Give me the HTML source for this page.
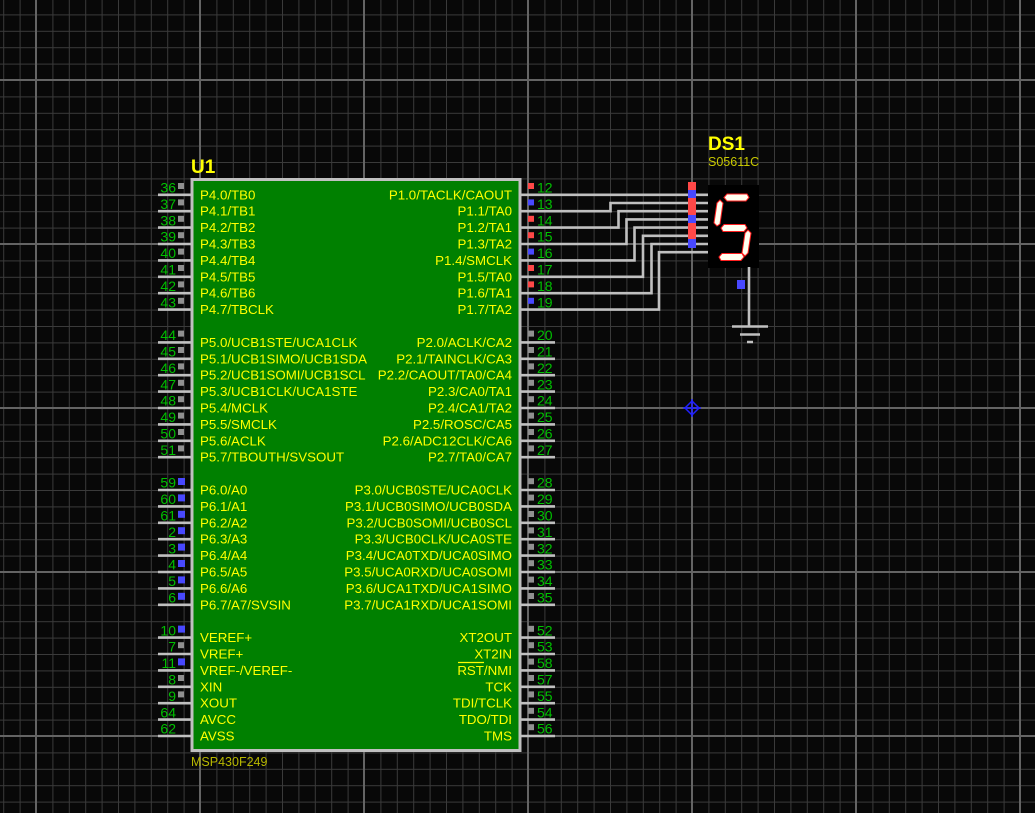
<!DOCTYPE html>
<html><head><meta charset="utf-8"><style>
html,body{margin:0;padding:0;background:#080808;overflow:hidden}
svg{display:block}
text{font-family:"Liberation Sans",Arial,sans-serif}
.l{fill:#ffff00;font-size:13.3px}
.r{fill:#ffff00;font-size:13.3px;text-anchor:end}
.nl{fill:#00c000;font-size:14px;text-anchor:end}
.nr{fill:#00c000;font-size:14px}
</style></head><body>
<svg width="1035" height="813" viewBox="0 0 1035 813" xmlns="http://www.w3.org/2000/svg">
<defs>
<pattern id="mn" x="36" y="80" width="16.4" height="16.4" patternUnits="userSpaceOnUse">
<path d="M0.5 0V16.4M0 0.5H16.4" stroke="#3a3a3a" stroke-width="1" fill="none"/>
</pattern>
<pattern id="mj" x="35" y="79" width="164" height="164" patternUnits="userSpaceOnUse">
<path d="M1 0V164M0 1H164" stroke="#646464" stroke-width="2" fill="none"/>
</pattern>
</defs>
<rect width="1035" height="813" fill="#080808"/>
<rect width="1035" height="813" fill="url(#mn)"/>
<rect width="1035" height="813" fill="url(#mj)"/>

<g stroke="#c0c0c0" stroke-width="2.6">
<path d="M158 194.8H192M158 211.2H192M158 227.6H192M158 244H192M158 260.4H192M158 276.8H192M158 293.2H192M158 309.6H192
M158 342.4H192M158 358.8H192M158 375.2H192M158 391.6H192M158 408H192M158 424.4H192M158 440.8H192M158 457.2H192
M158 490H192M158 506.4H192M158 522.8H192M158 539.2H192M158 555.6H192M158 572H192M158 588.4H192M158 604.8H192
M158 637.6H192M158 654H192M158 670.4H192M158 686.8H192M158 703.2H192M158 719.6H192M158 736H192"/>
<path d="M520 342.4H555M520 358.8H555M520 375.2H555M520 391.6H555M520 408H555M520 424.4H555M520 440.8H555M520 457.2H555
M520 490H555M520 506.4H555M520 522.8H555M520 539.2H555M520 555.6H555M520 572H555M520 588.4H555M520 604.8H555
M520 637.6H555M520 654H555M520 670.4H555M520 686.8H555M520 703.2H555M520 719.6H555M520 736H555"/>
</g>
<g stroke="#c0c0c0" stroke-width="2.6" fill="none">
<path d="M520 194.8H710"/>
<path d="M520 211.2H610.5V203H710"/>
<path d="M520 227.6H618.5V211.2H710"/>
<path d="M520 244H626.5V219.4H710"/>
<path d="M520 260.4H634.5V227.6H710"/>
<path d="M520 276.8H643V235.8H710"/>
<path d="M520 293.2H651.5V244H710"/>
<path d="M520 309.6H659V252.2H710"/>
</g>

<rect x="192" y="179.5" width="328" height="571" fill="#008000" stroke="#c0c0c0" stroke-width="3"/>

<g fill="#909090">
<rect x="178" y="183" width="6" height="6"/><rect x="178" y="199.4" width="6" height="6"/><rect x="178" y="215.8" width="6" height="6"/><rect x="178" y="232.2" width="6" height="6"/>
<rect x="178" y="248.6" width="6" height="6"/><rect x="178" y="265" width="6" height="6"/><rect x="178" y="281.4" width="6" height="6"/><rect x="178" y="297.8" width="6" height="6"/>
<rect x="178" y="330.6" width="6" height="6"/><rect x="178" y="347" width="6" height="6"/><rect x="178" y="363.4" width="6" height="6"/><rect x="178" y="379.8" width="6" height="6"/>
<rect x="178" y="396.2" width="6" height="6"/><rect x="178" y="412.6" width="6" height="6"/><rect x="178" y="429" width="6" height="6"/><rect x="178" y="445.4" width="6" height="6"/>
<rect x="178" y="642.2" width="6" height="6"/><rect x="178" y="675" width="6" height="6"/><rect x="178" y="691.4" width="6" height="6"/>
</g>
<g fill="#4848ff">
<rect x="178" y="478" width="7" height="7"/><rect x="178" y="494.4" width="7" height="7"/><rect x="178" y="510.8" width="7" height="7"/><rect x="178" y="527.2" width="7" height="7"/>
<rect x="178" y="543.6" width="7" height="7"/><rect x="178" y="560" width="7" height="7"/><rect x="178" y="576.4" width="7" height="7"/><rect x="178" y="592.8" width="7" height="7"/>
<rect x="178" y="625.6" width="7" height="7"/><rect x="178" y="658.4" width="7" height="7"/>
</g>
<g fill="#ff4848">
<rect x="528" y="183" width="6" height="6"/><rect x="528" y="215.8" width="6" height="6"/><rect x="528" y="232.2" width="6" height="6"/><rect x="528" y="265" width="6" height="6"/><rect x="528" y="281.4" width="6" height="6"/>
</g>
<g fill="#4848ff">
<rect x="528" y="199.4" width="6" height="6"/><rect x="528" y="248.6" width="6" height="6"/><rect x="528" y="297.8" width="6" height="6"/>
</g>
<g fill="#909090">
<rect x="528" y="330.6" width="6" height="6"/><rect x="528" y="347" width="6" height="6"/><rect x="528" y="363.4" width="6" height="6"/><rect x="528" y="379.8" width="6" height="6"/>
<rect x="528" y="396.2" width="6" height="6"/><rect x="528" y="412.6" width="6" height="6"/><rect x="528" y="429" width="6" height="6"/><rect x="528" y="445.4" width="6" height="6"/>
<rect x="528" y="478.2" width="6" height="6"/><rect x="528" y="494.6" width="6" height="6"/><rect x="528" y="511" width="6" height="6"/><rect x="528" y="527.4" width="6" height="6"/>
<rect x="528" y="543.8" width="6" height="6"/><rect x="528" y="560.2" width="6" height="6"/><rect x="528" y="576.6" width="6" height="6"/><rect x="528" y="593" width="6" height="6"/>
<rect x="528" y="625.8" width="6" height="6"/><rect x="528" y="642.2" width="6" height="6"/><rect x="528" y="658.6" width="6" height="6"/><rect x="528" y="675" width="6" height="6"/>
<rect x="528" y="691.4" width="6" height="6"/><rect x="528" y="707.8" width="6" height="6"/><rect x="528" y="724.2" width="6" height="6"/>
</g>

<g>
<text x="176" y="192.5" class="nl">36</text><text x="176" y="208.9" class="nl">37</text><text x="176" y="225.3" class="nl">38</text><text x="176" y="241.7" class="nl">39</text>
<text x="176" y="258.1" class="nl">40</text><text x="176" y="274.5" class="nl">41</text><text x="176" y="290.9" class="nl">42</text><text x="176" y="307.3" class="nl">43</text>
<text x="176" y="340.1" class="nl">44</text><text x="176" y="356.5" class="nl">45</text><text x="176" y="372.9" class="nl">46</text><text x="176" y="389.3" class="nl">47</text>
<text x="176" y="405.7" class="nl">48</text><text x="176" y="422.1" class="nl">49</text><text x="176" y="438.5" class="nl">50</text><text x="176" y="454.9" class="nl">51</text>
<text x="176" y="487.7" class="nl">59</text><text x="176" y="504.1" class="nl">60</text><text x="176" y="520.5" class="nl">61</text><text x="176" y="536.9" class="nl">2</text>
<text x="176" y="553.3" class="nl">3</text><text x="176" y="569.7" class="nl">4</text><text x="176" y="586.1" class="nl">5</text><text x="176" y="602.5" class="nl">6</text>
<text x="176" y="635.3" class="nl">10</text><text x="176" y="651.7" class="nl">7</text><text x="176" y="668.1" class="nl">11</text><text x="176" y="684.5" class="nl">8</text>
<text x="176" y="700.9" class="nl">9</text><text x="176" y="717.3" class="nl">64</text><text x="176" y="733.7" class="nl">62</text>
</g>
<g>
<text x="537" y="192.5" class="nr">12</text><text x="537" y="208.9" class="nr">13</text><text x="537" y="225.3" class="nr">14</text><text x="537" y="241.7" class="nr">15</text>
<text x="537" y="258.1" class="nr">16</text><text x="537" y="274.5" class="nr">17</text><text x="537" y="290.9" class="nr">18</text><text x="537" y="307.3" class="nr">19</text>
<text x="537" y="340.1" class="nr">20</text><text x="537" y="356.5" class="nr">21</text><text x="537" y="372.9" class="nr">22</text><text x="537" y="389.3" class="nr">23</text>
<text x="537" y="405.7" class="nr">24</text><text x="537" y="422.1" class="nr">25</text><text x="537" y="438.5" class="nr">26</text><text x="537" y="454.9" class="nr">27</text>
<text x="537" y="487.7" class="nr">28</text><text x="537" y="504.1" class="nr">29</text><text x="537" y="520.5" class="nr">30</text><text x="537" y="536.9" class="nr">31</text>
<text x="537" y="553.3" class="nr">32</text><text x="537" y="569.7" class="nr">33</text><text x="537" y="586.1" class="nr">34</text><text x="537" y="602.5" class="nr">35</text>
<text x="537" y="635.3" class="nr">52</text><text x="537" y="651.7" class="nr">53</text><text x="537" y="668.1" class="nr">58</text><text x="537" y="684.5" class="nr">57</text>
<text x="537" y="700.9" class="nr">55</text><text x="537" y="717.3" class="nr">54</text><text x="537" y="733.7" class="nr">56</text>
</g>

<g>
<text x="200" y="199.3" class="l">P4.0/TB0</text><text x="200" y="215.7" class="l">P4.1/TB1</text><text x="200" y="232.1" class="l">P4.2/TB2</text><text x="200" y="248.5" class="l">P4.3/TB3</text>
<text x="200" y="264.9" class="l">P4.4/TB4</text><text x="200" y="281.3" class="l">P4.5/TB5</text><text x="200" y="297.7" class="l">P4.6/TB6</text><text x="200" y="314.1" class="l">P4.7/TBCLK</text>
<text x="200" y="346.9" class="l">P5.0/UCB1STE/UCA1CLK</text><text x="200" y="363.3" class="l">P5.1/UCB1SIMO/UCB1SDA</text><text x="200" y="379.7" class="l">P5.2/UCB1SOMI/UCB1SCL</text><text x="200" y="396.1" class="l">P5.3/UCB1CLK/UCA1STE</text>
<text x="200" y="412.5" class="l">P5.4/MCLK</text><text x="200" y="428.9" class="l">P5.5/SMCLK</text><text x="200" y="445.3" class="l">P5.6/ACLK</text><text x="200" y="461.7" class="l">P5.7/TBOUTH/SVSOUT</text>
<text x="200" y="494.5" class="l">P6.0/A0</text><text x="200" y="510.9" class="l">P6.1/A1</text><text x="200" y="527.3" class="l">P6.2/A2</text><text x="200" y="543.7" class="l">P6.3/A3</text>
<text x="200" y="560.1" class="l">P6.4/A4</text><text x="200" y="576.5" class="l">P6.5/A5</text><text x="200" y="592.9" class="l">P6.6/A6</text><text x="200" y="609.3" class="l">P6.7/A7/SVSIN</text>
<text x="200" y="642.1" class="l">VEREF+</text><text x="200" y="658.5" class="l">VREF+</text><text x="200" y="674.9" class="l">VREF-/VEREF-</text><text x="200" y="691.3" class="l">XIN</text>
<text x="200" y="707.7" class="l">XOUT</text><text x="200" y="724.1" class="l">AVCC</text><text x="200" y="740.5" class="l">AVSS</text>
</g>
<g>
<text x="512" y="199.3" class="r">P1.0/TACLK/CAOUT</text><text x="512" y="215.7" class="r">P1.1/TA0</text><text x="512" y="232.1" class="r">P1.2/TA1</text><text x="512" y="248.5" class="r">P1.3/TA2</text>
<text x="512" y="264.9" class="r">P1.4/SMCLK</text><text x="512" y="281.3" class="r">P1.5/TA0</text><text x="512" y="297.7" class="r">P1.6/TA1</text><text x="512" y="314.1" class="r">P1.7/TA2</text>
<text x="512" y="346.9" class="r">P2.0/ACLK/CA2</text><text x="512" y="363.3" class="r">P2.1/TAINCLK/CA3</text><text x="512" y="379.7" class="r">P2.2/CAOUT/TA0/CA4</text><text x="512" y="396.1" class="r">P2.3/CA0/TA1</text>
<text x="512" y="412.5" class="r">P2.4/CA1/TA2</text><text x="512" y="428.9" class="r">P2.5/ROSC/CA5</text><text x="512" y="445.3" class="r">P2.6/ADC12CLK/CA6</text><text x="512" y="461.7" class="r">P2.7/TA0/CA7</text>
<text x="512" y="494.5" class="r">P3.0/UCB0STE/UCA0CLK</text><text x="512" y="510.9" class="r">P3.1/UCB0SIMO/UCB0SDA</text><text x="512" y="527.3" class="r">P3.2/UCB0SOMI/UCB0SCL</text><text x="512" y="543.7" class="r">P3.3/UCB0CLK/UCA0STE</text>
<text x="512" y="560.1" class="r">P3.4/UCA0TXD/UCA0SIMO</text><text x="512" y="576.5" class="r">P3.5/UCA0RXD/UCA0SOMI</text><text x="512" y="592.9" class="r">P3.6/UCA1TXD/UCA1SIMO</text><text x="512" y="609.3" class="r">P3.7/UCA1RXD/UCA1SOMI</text>
<text x="512" y="642.1" class="r">XT2OUT</text><text x="512" y="658.5" class="r">XT2IN</text><text x="512" y="674.9" class="r">RST/NMI</text><text x="512" y="691.3" class="r">TCK</text>
<text x="512" y="707.7" class="r">TDI/TCLK</text><text x="512" y="724.1" class="r">TDO/TDI</text><text x="512" y="740.5" class="r">TMS</text>
</g>
<path d="M458 662.5H484" stroke="#ffff00" stroke-width="1.2"/>

<text x="191" y="173" fill="#ffff00" font-size="19" font-weight="bold">U1</text>
<text x="191" y="766" fill="#b8b800" font-size="12.5">MSP430F249</text>

<rect x="708" y="185" width="51" height="83" fill="#000"/>
<rect x="688" y="182" width="8" height="8" fill="#ff4848"/>
<rect x="688" y="190" width="8" height="8" fill="#4848ff"/>
<rect x="688" y="198" width="8" height="17" fill="#ff4848"/>
<rect x="688" y="215" width="8" height="8" fill="#4848ff"/>
<rect x="688" y="223" width="8" height="16" fill="#ff4848"/>
<rect x="688" y="239" width="8" height="9" fill="#4848ff"/>
<g fill="#fffff0" stroke="#ff2020" stroke-width="1">
<polygon points="724,197.5 727,194 747,194 749,197.5 746,201 727,201"/>
<polygon points="720,200 723,203 720,224 717,226 714,223 717,203"/>
<polygon points="721,228 724,224.5 745,224.5 747,228 744,231.5 723,231.5"/>
<polygon points="748,230 751,233 748,253 745,256 742,253 745,233"/>
<polygon points="719,257 722,253.5 742,253.5 744,257 741,260.5 721,260.5"/>
</g>
<path d="M749 267V326" stroke="#c0c0c0" stroke-width="2.6"/>
<path d="M732 326.5H768M740 334.5H760M747 342H753" stroke="#c0c0c0" stroke-width="2.6"/>
<rect x="737" y="280" width="8" height="9" fill="#4848ff"/>
<text x="708" y="150" fill="#ffff00" font-size="19" font-weight="bold">DS1</text>
<text x="708" y="166" fill="#c8c800" font-size="12.5">S05611C</text>

<g stroke="#2020ff" stroke-width="1.5" fill="none">
<polygon points="692,401 699,408 692,415 685,408"/>
<path d="M692 399V417M683 408H701"/>
</g>
</svg>
</body></html>
